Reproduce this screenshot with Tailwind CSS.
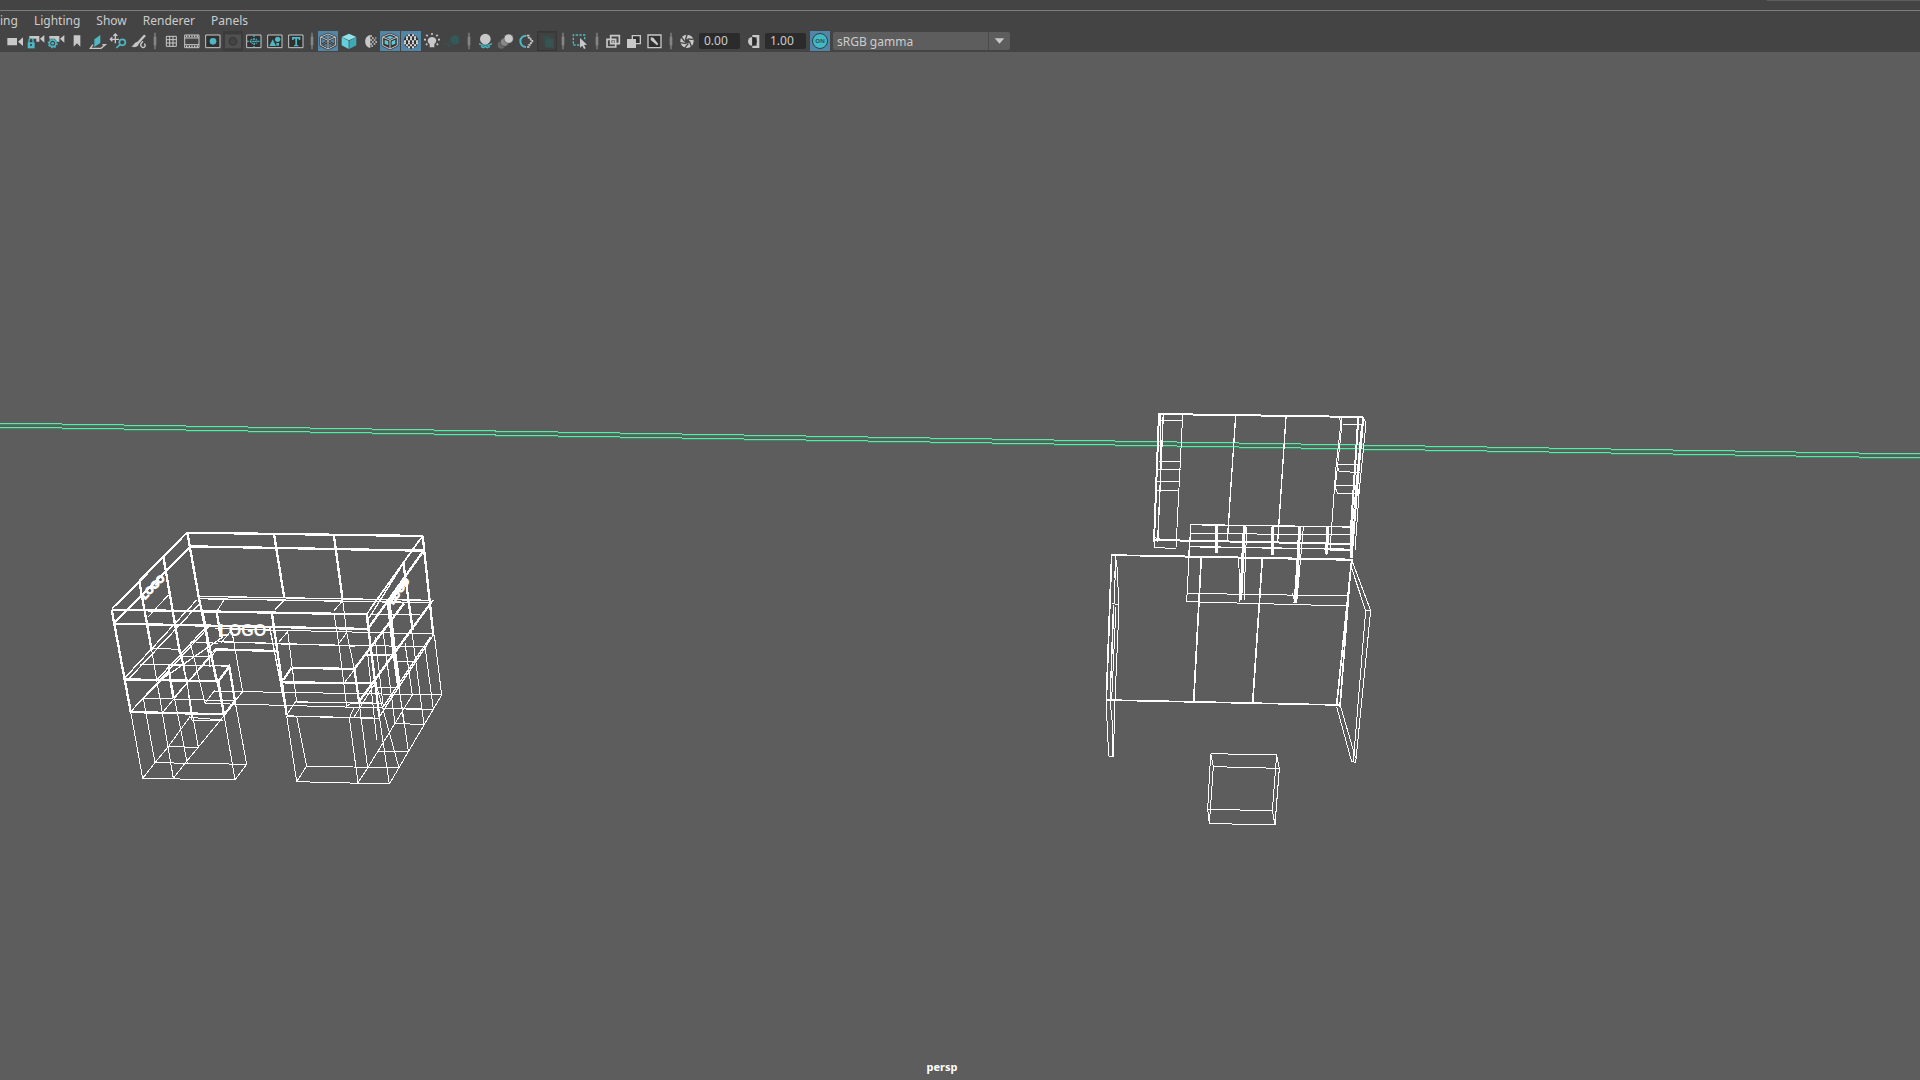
<!DOCTYPE html>
<html lang="en">
<head>
    <meta charset="UTF-8">
    <meta name="viewport" content="width=device-width, initial-scale=1.0">
    <title>persp</title>
    <script src="https://cdn.jsdelivr.net/npm/@tailwindcss/browser@4"></script>
</head>
<body class="bg-[#5d5d5d] text-[#cccccc] text-xs font-['Noto_Sans','Open_Sans',sans-serif] flex flex-col h-screen overflow-hidden">
    <header class="bg-[#444444]">
        <div class="h-[10px] flex justify-end">
            <div class="w-[153px] border-t border-[#5d5d5d]"></div>
        </div>
        <!-- panel menu -->
        <nav class="h-5 border-t border-[#7c7c7c] flex items-center gap-4 leading-5">
            <button>ing</button>
            <button>Lighting</button>
            <button>Show</button>
            <button>Renderer</button>
            <button>Panels</button>
        </nav>
        <!-- panel toolbar -->
        <div class="h-[22px] pl-[5px] flex items-center">
            <div class="w-36 flex justify-between">
                <button class="size-5" aria-label="Select camera"><svg viewBox="0 0 60 60" fill="#c8c8c8"><path d="M7 21h29v22H7zM39 32l15-13v26z"/></svg></button>
                <button class="size-5" aria-label="Lock camera"><svg viewBox="0 0 60 60" fill="#c8c8c8"><path d="M10 15h30v17h-9v-9H10zM42 23l13-11v23z"/><path d="M5 34h21v18H5z" fill="#4db8c4"/><path d="M9 36v-8a6 6 0 0 1 12 0v8" fill="none" stroke="#4db8c4" stroke-width="4"/><circle cx="15" cy="42" r="3" fill="#333"/></svg></button>
                <button class="size-5" aria-label="Camera attributes"><svg viewBox="0 0 60 60" fill="#c8c8c8"><path d="M10 15h30v17h-6l-8-9H10zM42 23l13-11v23z"/><circle cx="20" cy="37" r="10" fill="none" stroke="#4db8c4" stroke-width="5"/><circle cx="20" cy="37" r="13" fill="none" stroke="#4db8c4" stroke-width="4" stroke-dasharray="5 5"/><circle cx="20" cy="37" r="4" fill="#4db8c4"/></svg></button>
                <button class="size-5" aria-label="Bookmarks"><svg viewBox="0 0 60 60" fill="#c8c8c8"><path d="M20 13h20v34L30 37 20 47z"/></svg></button>
                <button class="size-5" aria-label="Image plane"><svg viewBox="0 0 60 60"><path d="M15 41L7 52h32l13-11h-9" fill="none" stroke="#c8c8c8" stroke-width="4"/><path d="M19 25l18-13v24L19 48z" fill="#4db8c4"/></svg></button>
                <button class="size-5" aria-label="2D pan and zoom"><svg viewBox="0 0 60 60" fill="none"><path d="M7 25h26M13 19l-6 6 6 6M22 9v28M16 15l6-6 6 6" stroke="#c8c8c8" stroke-width="4"/><circle cx="43" cy="34" r="9" stroke="#4db8c4" stroke-width="5"/><path d="M36 41L25 51" stroke="#4db8c4" stroke-width="5"/></svg></button>
                <button class="size-5" aria-label="Grease pencil"><svg viewBox="0 0 60 60" fill="none" stroke="#c8c8c8"><path d="M48 13L26 37" stroke-width="7"/><path d="M26 33c-10 0-9 10-18 13 9 4 19 1 21-8z" fill="#c8c8c8"/><path d="M42 31c-13 9-5 21 3 18 6-3 4-10 0-10" stroke-width="4"/></svg></button>
            </div>
            <div class="w-3 flex justify-center"><svg class="h-5 w-2" viewBox="0 0 24 60" fill="#858585"><path d="M10 5h4v50h-4zM8 17h8v26H8z"/></svg></div>
            <div class="w-[145px] flex justify-between">
                <button class="size-5" aria-label="Grid"><svg viewBox="0 0 60 60" fill="none" stroke="#c8c8c8" stroke-width="3"><path d="M16 16h30v30H16zM16 26h30M16 36h30M26 16v30M36 16v30"/></svg></button>
                <button class="size-5" aria-label="Film gate"><svg viewBox="0 0 60 60" fill="none" stroke="#c8c8c8"><path d="M8 12h43v38H8zM8 21h43M8 41h43" stroke-width="3"/><path d="M12 16h36M12 46h36" stroke-width="5" stroke-dasharray="4 4"/></svg></button>
                <button class="size-5" aria-label="Resolution gate"><svg viewBox="0 0 60 60"><path d="M8 12h43v38H8z" fill="#303030" stroke="#c8c8c8" stroke-width="3"/><circle cx="30" cy="31" r="10" fill="#4db8c4"/></svg></button>
                <button class="size-5 bg-[#3b3b3b]" aria-label="Gate mask" disabled><svg viewBox="0 0 60 60"><path d="M6 10h48v42H6z" fill="#505050"/><circle cx="30" cy="31" r="11" fill="#444" stroke="#3b3b3b" stroke-width="5"/></svg></button>
                <button class="size-5" aria-label="Field chart"><svg viewBox="0 0 60 60" fill="none"><path d="M8 12h43v38H8z" fill="#303030" stroke="#c8c8c8" stroke-width="3"/><path d="M9 31h42M30 13v36" stroke="#4db8c4" stroke-width="4" stroke-dasharray="5 3"/><path d="M21 25h18v12H21z" stroke="#4db8c4" stroke-width="3" stroke-dasharray="4 3"/></svg></button>
                <button class="size-5" aria-label="Safe action"><svg viewBox="0 0 60 60"><path d="M8 12h43v38H8z" fill="#303030" stroke="#c8c8c8" stroke-width="3"/><circle cx="38" cy="25" r="8" fill="#4db8c4"/><path d="M23 25L13 45h20z" fill="#4db8c4"/><path d="M34 36h8v8h-8z" fill="#4db8c4"/></svg></button>
                <button class="size-5" aria-label="Safe title"><svg viewBox="0 0 60 60"><path d="M8 12h43v38H8z" fill="#303030" stroke="#c8c8c8" stroke-width="3"/><path d="M18 18h25v9h-4l-2-4h-4v19h4v4H24v-4h4V23h-4l-2 4h-4z" fill="#4db8c4"/></svg></button>
            </div>
            <div class="w-3 flex justify-center"><svg class="h-5 w-2" viewBox="0 0 24 60" fill="#858585"><path d="M10 5h4v50h-4zM8 17h8v26H8z"/></svg></div>
            <div class="w-[145px] flex justify-between">
                <button class="size-5 bg-[#5285a6]" aria-label="Wireframe"><svg viewBox="0 0 60 60" fill="none" stroke-linejoin="round"><path d="M30 9l22 9v25L30 54 8 43V18zM8 18l22 10 22-10M30 28v26M8 43l22-11 22 11" stroke="#333" stroke-width="7"/><path d="M30 9l22 9v25L30 54 8 43V18zM8 18l22 10 22-10M30 28v26" stroke="#c8c8c8" stroke-width="3"/><path d="M8 43l22-11 22 11M30 9v19" stroke="#999" stroke-width="2"/></svg></button>
                <button class="size-5" aria-label="Smooth shade all"><svg viewBox="0 0 60 60"><path d="M30 8l22 10-22 10L8 18z" fill="#8fe3ea"/><path d="M8 19l21 10v25L8 43z" fill="#62cfd9"/><path d="M52 19L31 29v25l21-11z" fill="#3fa9b5"/></svg></button>
                <button class="size-5" aria-label="Use default material"><svg viewBox="0 0 60 60"><path d="M31 12a20 20 0 0 0 0 39z" fill="#c8c8c8"/><path d="M31 15h10M36 21h13M31 27h20M36 33h15M31 39h17M34 45h10" stroke="#c8c8c8" stroke-width="5" stroke-dasharray="5 5"/></svg></button>
                <button class="size-5 bg-[#5285a6]" aria-label="Wireframe on shaded"><svg viewBox="0 0 60 60" stroke-linejoin="round"><path d="M30 9l22 9v25L30 54 8 43V18zM8 18l22 10 22-10M30 28v26" fill="#333" stroke="#333" stroke-width="6"/><path d="M30 14l10 5-10 4-10-4zM14 26l11 5v12l-11-5zM46 26l-11 5v12l11-5z" fill="#5cc8d2"/><path d="M30 9l22 9v25L30 54 8 43V18zM8 18l22 10 22-10M30 28v26" fill="none" stroke="#c8c8c8" stroke-width="3"/></svg></button>
                <button class="size-5 bg-[#5285a6]" aria-label="Textured"><svg viewBox="0 0 60 60"><circle cx="30" cy="31" r="22" fill="#303030"/><path d="M21 13h18M15 25h34M9 37h42M21 49h18" stroke="#d8d8d8" stroke-width="6" stroke-dasharray="6 6"/><path d="M15 19h32M9 31h42M15 43h32" stroke="#d8d8d8" stroke-width="6" stroke-dasharray="6 6"/></svg></button>
                <button class="size-5" aria-label="Use all lights"><svg viewBox="0 0 60 60"><path d="M23 39c-11-8-5-21 7-21s18 13 7 21v10H23z" fill="#c8c8c8"/><path d="M30 6v6M13 11l4 5M47 11l-4 5M6 26h6M48 26h6M12 42l4-4M48 42l-4-4" stroke="#c8c8c8" stroke-width="5"/></svg></button>
                <button class="size-5" aria-label="Shadows" disabled><svg viewBox="0 0 60 60"><circle cx="36" cy="27" r="14" fill="#34595a"/><path d="M4 39h14M13 32h7M15 44h10" stroke="#3a5152" stroke-width="5"/></svg></button>
            </div>
            <div class="w-3 flex justify-center"><svg class="h-5 w-2" viewBox="0 0 24 60" fill="#858585"><path d="M10 5h4v50h-4zM8 17h8v26H8z"/></svg></div>
            <div class="w-[82px] flex justify-between">
                <button class="size-5" aria-label="Ambient occlusion"><svg viewBox="0 0 60 60"><circle cx="31" cy="24" r="16" fill="#c8c8c8"/><path d="M12 38l10 5 9-3 9 3 11-5M18 46l7 4 6-4 6 4 8-4" fill="none" stroke="#4db8c4" stroke-width="4"/></svg></button>
                <button class="size-5" aria-label="Motion blur"><svg viewBox="0 0 60 60"><circle cx="16" cy="42" r="11" fill="#666"/><circle cx="26" cy="33" r="13" fill="#888" stroke="#444" stroke-width="2"/><circle cx="38" cy="23" r="14" fill="#c8c8c8" stroke="#444" stroke-width="2"/></svg></button>
                <button class="size-5" aria-label="Anti-aliasing"><svg viewBox="0 0 60 60" fill="none"><path d="M30 14a17 17 0 0 0 0 34" stroke="#4db8c4" stroke-width="6"/><path d="M32 14h6v6h6v6h5v10h-5v6h-6v6h-6" stroke="#c8c8c8" stroke-width="5" stroke-dasharray="7 3"/></svg></button>
                <button class="size-5 bg-[#373737]" aria-label="Depth of field" disabled><svg viewBox="0 0 60 60"><path d="M4 5h52v52H4z" fill="#414141"/><path d="M18 14h24v24H18z" fill="#364c4b"/><path d="M25 23h25v27H25z" fill="#355453"/></svg></button>
            </div>
            <div class="w-3 flex justify-center"><svg class="h-5 w-2" viewBox="0 0 24 60" fill="#858585"><path d="M10 5h4v50h-4zM8 17h8v26H8z"/></svg></div>
            <div class="w-[22px] flex justify-center">
                <button class="size-5" aria-label="Isolate select"><svg viewBox="0 0 60 60"><path d="M28 42H10V12h34v14" fill="none" stroke="#4db8c4" stroke-width="4" stroke-dasharray="7 4"/><path d="M30 21l21 20-9 1 5 10-5 2-5-10-7 6z" fill="#c8c8c8"/></svg></button>
            </div>
            <div class="w-3 flex justify-center"><svg class="h-5 w-2" viewBox="0 0 24 60" fill="#858585"><path d="M10 5h4v50h-4zM8 17h8v26H8z"/></svg></div>
            <div class="w-[62px] flex justify-between">
                <button class="size-5" aria-label="X-ray"><svg viewBox="0 0 60 60" fill="none" stroke="#c8c8c8" stroke-width="5"><path d="M23 14h26v24H23z"/><path d="M12 25h26v23H12z"/><path d="M28 29h6v6h-6z" fill="#c8c8c8" stroke="none"/></svg></button>
                <button class="size-5" aria-label="X-ray active components"><svg viewBox="0 0 60 60"><path d="M25 14h24v24H25z" fill="#303030" stroke="#c8c8c8" stroke-width="4"/><path d="M9 24h27v27H9z" fill="#c8c8c8"/></svg></button>
                <button class="size-5" aria-label="X-ray joints"><svg viewBox="0 0 60 60"><path d="M9 12h39v38H9z" fill="#303030" stroke="#c8c8c8" stroke-width="4"/><path d="M17 19l8 1 15 19-4 4-19-16z" fill="#c8c8c8"/></svg></button>
            </div>
            <div class="w-3 flex justify-center"><svg class="h-5 w-2" viewBox="0 0 24 60" fill="#858585"><path d="M10 5h4v50h-4zM8 17h8v26H8z"/></svg></div>
            <button class="size-5" aria-label="Exposure"><svg viewBox="0 0 60 60"><circle cx="30" cy="31" r="20" fill="#c8c8c8"/><circle cx="30" cy="31" r="7" fill="#444"/><path d="M25 27L31 9M32 24l18 1M37 31l7 18M34 38L22 52M27 38L9 35M23 32L13 18" stroke="#444" stroke-width="4"/></svg></button>
            <input class="ml-0.5 w-[41px] h-4 pl-[5px] rounded-xs bg-[#2b2b2b] text-[#cccccc]" type="text" value="0.00" aria-label="Exposure value">
            <button class="ml-[3px] size-5" aria-label="Gamma"><svg viewBox="0 0 60 60"><path d="M28 12h21v39H28v-7h13V19H28z" fill="#c8c8c8"/><path d="M28 18a13 13 0 0 0 0 26z" fill="#c8c8c8"/><path d="M28 18a13 13 0 0 1 0 26z" fill="#2b2b2b"/></svg></button>
            <input class="ml-0.5 w-[41px] h-4 pl-[5px] rounded-xs bg-[#2b2b2b] text-[#cccccc]" type="text" value="1.00" aria-label="Gamma value">
            <button class="ml-1 size-5 bg-[#5285a6] flex items-center justify-center" aria-label="View transform"><span class="size-4 rounded-full border border-[#24454b] bg-[#45b6c2] text-[#1f5962] text-[6px] leading-[14px] font-bold text-center">ON</span></button>
            <div class="relative ml-[3px]">
                <select class="appearance-none block w-[177px] h-[18px] pl-1 pt-px rounded-xs bg-[#5d5d5d] text-[#cccccc] leading-[17px]" aria-label="View transform name">
                    <option>sRGB gamma</option>
                </select>
                <svg class="absolute right-0 top-0 w-[22px] h-[18px] border-l border-[#4b4b4b] pointer-events-none" viewBox="0 0 22 18" fill="#c8c8c8"><path d="M6 6h10l-5 6z"/></svg>
            </div>
        </div>
    </header>

    <main class="relative flex-1 min-h-0">
        <svg class="size-full" viewBox="0 52 1920 1028" fill="none" stroke="#ffffff" shape-rendering="crispEdges">
            <!-- booth with side counters -->
            <svg x="100" y="520" width="350" height="270" viewBox="0 0 1050 810" stroke-width="3">
                <g stroke-width="7">
                    <path d="M260 38L968 48M268 79L968 92M35 269L800 283M45 311L810 327"/>
                    <path d="M268 82L45 307M35 269L92 575M262 38L297 235L315 320L350 480"/>
                    <path d="M118 185L155 390M190 110L240 400M75 478L355 484M92 576L372 583"/>
                    <path d="M355 484L388 440L405 543L372 585ZM205 440L220 535M350 275L362 350"/>
                    <path d="M515 275L560 585M345 388L528 393M522 42L553 235M702 48L728 240"/>
                    <path d="M968 48L1000 345M968 96L805 325M800 283L838 590"/>
                    <path d="M763 447L777 545L988 255M763 447L912 250M550 487L830 490M575 443L763 447M550 480L575 443"/>
                </g>
                <g stroke-width="12">
                    <path d="M865 240L882 390L897 500M870 242L918 178"/>
                </g>
                <g stroke-width="7">
                    <path d="M910 130L938 330"/>
                </g>
                <g stroke-width="4">
                    <path d="M260 38L35 266M252 48L48 258M295 229L990 241M295 236L990 248M120 433L388 438M75 473L290 240M85 478L300 250"/>
                    <path d="M92 575L325 322M170 480L315 325M182 480L370 350M220 535L350 390M240 400L262 490"/>
                    <path d="M315 320L330 440M310 280L345 470M350 480L372 585M345 325L510 330M355 365L765 378"/>
                    <path d="M968 48L800 283M958 60L808 270M910 130L800 305M1000 345L838 590M992 350L850 560M825 480L1000 240"/>
                    <path d="M897 500L838 590M510 325L560 585M560 585L590 540M560 588L838 595M590 546L850 550"/>
                </g>
                <!-- left counter legs and back frame -->
                <path d="M92 575L128 775L405 780L440 733L165 728L128 775M130 535L165 728M372 585L405 780M405 543L440 733"/>
                <path d="M155 390L220 775L255 730L370 590M205 440L262 730M130 535L220 537L405 543M205 680L295 682M165 728L205 680L270 590"/>
                <path d="M270 592L365 600M245 400L295 682M262 490L275 600M270 365L315 550M272 365L355 370M250 410L330 411M275 600L370 600"/>
                <path d="M372 240L350 275M205 225L145 290M155 385L240 388M190 575L345 388M130 535L205 460"/>
                <path d="M428 515L395 330L362 370M428 515L405 543M340 515L428 515M315 550L345 510M428 515L1025 525M315 550L1000 568"/>
                <!-- right counter legs -->
                <path d="M560 588L590 785L868 792L1025 525L1003 345M590 785L620 738L897 744M590 588L620 738M748 595L774 788L803 744L885 610"/>
                <path d="M748 595L763 560M838 590L868 792M777 545L803 744M825 480L897 744M835 695L925 693M885 610L972 614M915 567L1000 568"/>
                <path d="M897 500L925 693M935 330L972 614M975 380L1000 568M882 390L912 612M850 340L885 610M915 370L937 525"/>
                <path d="M510 330L1000 342M540 372L975 380M810 283L960 284M800 402L875 402M790 407L870 407M890 424L945 425M825 502L897 502"/>
                <path d="M525 268L553 240M702 272L728 242M702 280L717 375L740 558L763 545M740 338L763 447M537 365L563 335L590 546M728 242L740 338L717 370"/>
                <path d="M733 488L763 450M763 590L825 490M803 402L830 660M885 610L937 525M825 350L850 560"/>
            </svg>
            <!-- signs on the booth walls -->
            <g fill="#ffffff" stroke="none" font-family="Liberation Sans" font-weight="bold" shape-rendering="auto">
                <text x="219" y="636" font-size="16">LOGO</text>
                <text font-size="10" stroke="#ffffff" transform="translate(145 600) rotate(-46)">LOGO</text>
                <text font-size="10" stroke="#ffffff" transform="translate(393 605) rotate(-55)">LOGO</text>
            </g>

            <!-- horizon curves -->
            <path d="M0 424L1920 455M0 428L1920 459" stroke="#2f8f63"/>
            <path d="M0 423L1920 454M0 427L1920 458" stroke="#6be0a8"/>

            <!-- shelf unit -->
            <svg x="1140" y="400" width="240" height="220" viewBox="0 0 720 660" stroke-width="3">
                <g stroke-width="6">
                    <path d="M55 42L670 51M57 41L42 425M670 51L655 220L635 470M655 51L632 400"/>
                    <path d="M45 420L640 432M0 467L640 479"/>
                </g>
                <g stroke-width="4">
                    <path d="M70 41L53 425M150 374L640 381M150 440L640 448M287 46L270 300L262 425M438 50L413 425"/>
                </g>
                <g stroke-width="9">
                    <path d="M230 378L230 458M313 378L308 480L302 600M396 380L396 465M479 382L473 500L465 608M563 382L560 462M635 380L635 475"/>
                </g>
                <path d="M128 44L108 443M42 425L42 443L108 445M62 61L125 62M55 183L122 184M53 208L122 209M50 245L118 246M50 271L118 271M62 45L62 185"/>
                <path d="M605 50L588 200L570 450L640 453M598 55L606 72L585 270M678 70L658 270L645 450M665 72L635 400M670 51L678 70M606 72L672 73"/>
                <path d="M588 193L655 194M598 215L660 217M582 255L650 256M590 280L658 281M585 255L592 280M590 193L598 215M650 256L658 281"/>
                <path d="M152 374L140 605L625 618M150 400L640 405M140 580L620 588M152 400L145 470M230 378L225 460M320 380L312 600M296 470L300 605M490 382L470 610M458 580L465 610"/>
                <path d="M555 430L560 465M575 382L570 450M45 413L65 418"/>
            </svg>

            <!-- backdrop, side panels and box -->
            <svg x="1090" y="540" width="300" height="300" viewBox="0 0 900 900" stroke-width="3">
                <g stroke-width="5">
                    <path d="M62 45L785 60M48 480L750 495M334 50L311 487M517 54L488 490M785 60L740 495"/>
                    <path d="M783 70L750 500"/>
                </g>
                <path d="M66 46L50 480M78 48L60 490"/>
                <path d="M64 46L58 200L48 480L56 648L70 650L75 480L87 200L80 60L72 115M65 190L88 195M70 195L60 480L68 560V648M78 200L65 480"/>
                <path d="M785 60L842 212L797 667L785 665L740 500M785 85L827 212L842 212M827 212L790 665M752 500L797 655"/>
                <path d="M362 641L560 645L568 685L555 854L358 851L353 808L362 641L370 680L568 685M370 680L358 851M353 808L547 812L555 854M560 645L547 812"/>
            </svg>
        </svg>
        <p class="absolute bottom-[5px] inset-x-0 pr-9 text-center text-[11px] leading-4 font-bold text-white">persp</p>
    </main>
</body>
</html>
